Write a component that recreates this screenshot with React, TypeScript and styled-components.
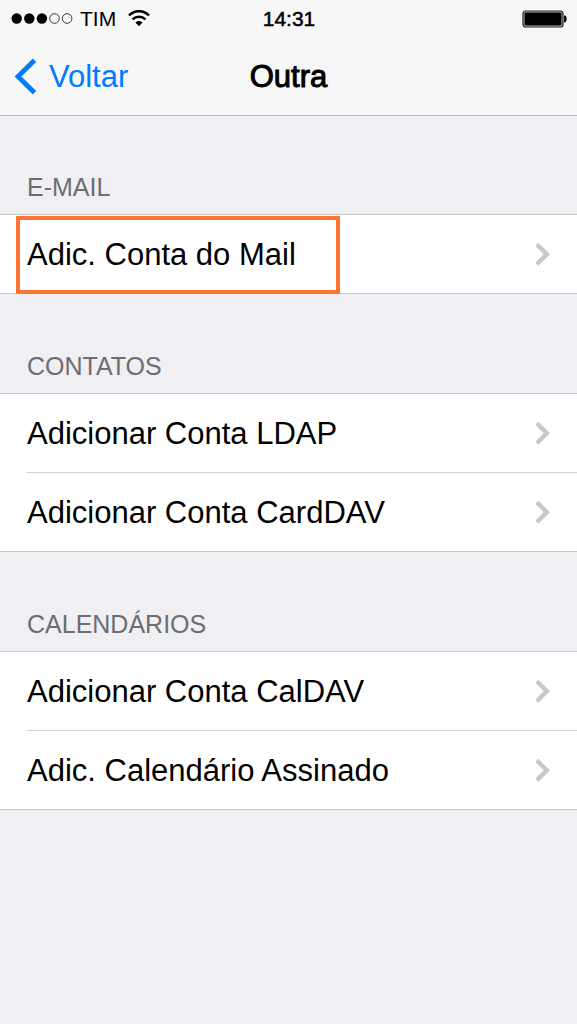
import React from 'react';
import styled, { createGlobalStyle } from 'styled-components';

const GlobalStyle = createGlobalStyle`
  *, *::before, *::after { box-sizing: border-box; }
  body {
    margin: 0;
    background: #efeff4;
    color: #000;
    font-family: "Helvetica Neue", "Liberation Sans", Arial, sans-serif;
  }
`;

const Screen = styled.div`
  min-height: 100vh;
  background: #efeff4;
`;

const TopBar = styled.header`
  background: #f7f7f7;
  border-bottom: 1px solid #b9b9be;
`;

const StatusBar = styled.div`
  display: grid;
  grid-template-columns: 1fr auto 1fr;
  align-items: center;
  height: 37px;
  padding: 0 10px 0 11px;
  font-size: 21px;
  line-height: 24px;
`;

const Carrier = styled.div`
  display: flex;
  align-items: center;
  gap: 7px;
`;

const CarrierName = styled.span`
  margin-right: 5px;
`;

const Clock = styled.time`
  -webkit-text-stroke: 0.5px #000;
`;

const Battery = styled.svg`
  justify-self: end;
`;

const NavBar = styled.nav`
  display: grid;
  grid-template-columns: 1fr auto 1fr;
  align-items: center;
  height: 78px;
  padding: 0 14px;
`;

const BackButton = styled.button`
  display: flex;
  align-items: center;
  justify-self: start;
  gap: 12px;
  padding: 0;
  border: 0;
  background: none;
  color: #007aff;
  font: inherit;
  font-size: 31px;
  line-height: 38px;
  cursor: pointer;
`;

const BackLabel = styled.span`
  padding-top: 2px;
`;

const Title = styled.h1`
  margin: 0;
  padding-top: 2px;
  font-size: 31px;
  font-weight: 400;
  line-height: 38px;
  -webkit-text-stroke: 1px #000;
`;

const Content = styled.main`
  display: flex;
  flex-direction: column;
  gap: 40px;
  padding: 39px 0;
`;

const GroupTitle = styled.h2`
  height: 59px;
  margin: 0;
  padding: 16px 27px 0;
  color: #6d6d72;
  font-size: 25px;
  font-weight: 400;
  line-height: 32px;
`;

const List = styled.ul`
  margin: 0;
  padding: 0;
  list-style: none;
  background: #fff;
  border: solid #c8c7cc;
  border-width: 1px 0;
`;

const Item = styled.li`
  position: relative;

  & + &::before {
    content: "";
    display: block;
    height: 1px;
    margin-left: 27px;
    background: #d1d0d5;
  }
`;

const RowButton = styled.button`
  display: flex;
  align-items: center;
  justify-content: space-between;
  width: 100%;
  height: 78px;
  padding: 0 26px 0 27px;
  border: 0;
  background: none;
  color: #000;
  font: inherit;
  font-size: 31px;
  line-height: 38px;
  text-align: left;
  cursor: pointer;
`;

const RowLabel = styled.span`
  padding-top: 2px;
`;

const Highlight = styled.span`
  position: absolute;
  top: 1px;
  bottom: -1px;
  left: 16px;
  width: 324px;
  border: 4px solid #ff7433;
  border-radius: 1px;
  pointer-events: none;
`;

const groups = [
  { title: 'E-MAIL', items: [{ label: 'Adic. Conta do Mail', marked: true }] },
  {
    title: 'CONTATOS',
    items: [{ label: 'Adicionar Conta LDAP' }, { label: 'Adicionar Conta CardDAV' }],
  },
  {
    title: 'CALENDÁRIOS',
    items: [{ label: 'Adicionar Conta CalDAV' }, { label: 'Adic. Calendário Assinado' }],
  },
] as { title: string; items: { label: string; marked?: boolean }[] }[];

const Signal = () => (
  <svg width="62" height="12" viewBox="0 0 62 12" aria-hidden="true">
    {[0, 1, 2, 3, 4].map((i) => (
      <circle
        key={i}
        cx={5.7 + i * 12.6}
        cy="5.5"
        r={i < 3 ? 5.2 : 4.8}
        fill={i < 3 ? '#000' : 'none'}
        stroke={i < 3 ? 'none' : '#333'}
        strokeWidth="1"
      />
    ))}
  </svg>
);

const Wifi = () => (
  <svg width="22" height="17" viewBox="0 0 22 17" fill="none" stroke="#000" strokeWidth="2.5" aria-hidden="true">
    <path d="M1 5.5C6.6 -0.3 15.4 -0.3 21 5.5" />
    <path d="M4.6 9.4C8.2 5.7 13.8 5.7 17.4 9.4" />
    <path d="M7.4 12.6C9.4 10.5 12.6 10.5 14.6 12.6L11 16.2Z" fill="#000" stroke="none" />
  </svg>
);

const Chevron = () => (
  <svg width="17" height="24" viewBox="0 0 17 24" fill="none" stroke="#c7c7cc" strokeWidth="4.4" aria-hidden="true">
    <path d="M2.8 2.3L12.8 12.3L2.8 22.3" />
  </svg>
);

export default function App() {
  return (
    <Screen>
      <GlobalStyle />
      <TopBar>
        <StatusBar>
          <Carrier>
            <Signal />
            <CarrierName>TIM</CarrierName>
            <Wifi />
          </Carrier>
          <Clock>14:31</Clock>
          <Battery width="45" height="18" viewBox="0 0 45 18" aria-hidden="true">
            <rect x="1" y="1" width="40" height="16" rx="2.5" fill="#bbb" stroke="#222" strokeWidth="1.2" />
            <rect x="2.5" y="2.5" width="37" height="13" rx="1" fill="#000" />
            <path d="M42 5.6H43C44.3 6.2 44.7 7.4 44.7 9C44.7 10.6 44.3 11.8 43 12.4H42Z" fill="#111" />
          </Battery>
        </StatusBar>
        <NavBar>
          <BackButton type="button">
            <svg width="23" height="37" viewBox="0 0 23 37" fill="none" stroke="#007aff" strokeWidth="4.8" aria-hidden="true">
              <path d="M20.5 2.2L4 18.5L20.5 34.8" />
            </svg>
            <BackLabel>Voltar</BackLabel>
          </BackButton>
          <Title>Outra</Title>
        </NavBar>
      </TopBar>
      <Content>
        {groups.map((group) => (
          <section key={group.title}>
            <GroupTitle>{group.title}</GroupTitle>
            <List>
              {group.items.map((item) => (
                <Item key={item.label}>
                  <RowButton type="button">
                    <RowLabel>{item.label}</RowLabel>
                    <Chevron />
                  </RowButton>
                  {item.marked && <Highlight />}
                </Item>
              ))}
            </List>
          </section>
        ))}
      </Content>
    </Screen>
  );
}
